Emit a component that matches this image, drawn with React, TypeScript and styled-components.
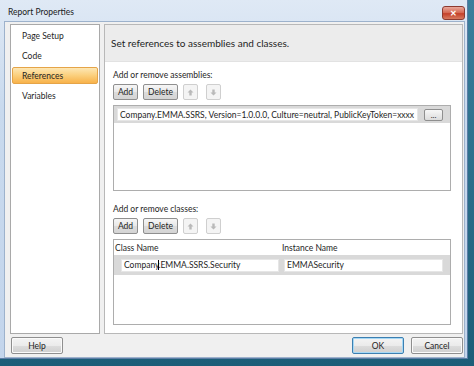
import React from 'react';
import styled, { createGlobalStyle } from 'styled-components';

const GlobalStyle = createGlobalStyle`
  html, body {
    margin: 0;
    padding: 0;
    width: 474px;
    height: 366px;
    overflow: hidden;
    background: linear-gradient(180deg, #3a7f9c 0%, #1c5d78 100%);
  }
  body {
    font-family: Lato, "Noto Sans", sans-serif;
    font-size: 8.5px;
    color: #1e1e1e;
  }
`;

const Window = styled.div`
  width: 468px;
  height: 359px;
  box-sizing: border-box;
  background: linear-gradient(180deg, #dfe9f5 0%, #c9daee 30%, #c3d5ec 100%);
  border-right: 1px solid #5d7ea6;
  border-bottom: 1px solid #5d7ea6;
  display: flex;
  flex-direction: column;
`;

const TitleBar = styled.div`
  height: 21px;
  flex-shrink: 0;
  display: flex;
  align-items: center;
  justify-content: space-between;
  padding: 3px 2px 0 8px;
  box-sizing: border-box;
`;

const Title = styled.span`
  font-size: 8.5px;
  color: #1a1a1a;
`;

const CloseButton = styled.div`
  width: 21px;
  height: 12px;
  margin-top: 1px;
  border-radius: 3px;
  border: 1px solid #8c3a30;
  background: linear-gradient(180deg, #e9a89c 0%, #d4654f 50%, #c3402a 55%, #d87a5f 100%);
  display: flex;
  align-items: center;
  justify-content: center;
  color: #fff;
  font-size: 8px;
  font-weight: bold;
  line-height: 1;
`;

const Client = styled.div`
  flex: 1;
  margin: 0 2px 3px 4px;
  background: #f0f0f0;
  border: 1px solid #9db2cc;
  padding: 2px 1px 0 5px;
  display: flex;
  flex-direction: column;
`;

const Main = styled.div`
  display: flex;
  gap: 4px;
  height: 310px;
  flex-shrink: 0;
`;

const Nav = styled.div`
  width: 90px;
  flex-shrink: 0;
  box-sizing: border-box;
  background: #fff;
  border: 1px solid #a9a9a9;
  padding: 2px 1px;
  display: flex;
  flex-direction: column;
  gap: 3px;
`;

const NavItem = styled.div<{ $selected?: boolean }>`
  height: 15px;
  display: flex;
  align-items: center;
  padding-left: 9px;
  border-radius: 2px;
  border: 1px solid ${p => (p.$selected ? '#e5a448' : 'transparent')};
  background: ${p =>
    p.$selected ? 'linear-gradient(180deg, #fde7b4 0%, #fbcf7c 50%, #f8b24a 100%)' : 'transparent'};
  color: #1e1e1e;
`;

const Content = styled.div`
  width: 359px;
  flex-shrink: 0;
  box-sizing: border-box;
  border: 1px solid #b8b8b8;
  background: #fff;
  display: flex;
  flex-direction: column;
`;

const Header = styled.div`
  height: 37px;
  flex-shrink: 0;
  box-sizing: border-box;
  background: #ececec;
  border-bottom: 1px solid #e2e2e2;
  display: flex;
  align-items: center;
  padding-left: 6px;
  font-size: 10px;
`;

const Body = styled.div`
  padding: 7px 11px 0 8px;
  display: flex;
  flex-direction: column;
`;

const Label = styled.div<{ $gap?: number }>`
  height: 12px;
  line-height: 12px;
  margin-top: ${p => p.$gap ?? 0}px;
  margin-bottom: 3px;
`;

const Toolbar = styled.div`
  display: flex;
  gap: 5px;
  margin-bottom: 5px;
`;

const ToolButton = styled.button<{ $width: number; $disabled?: boolean; $spaced?: boolean }>`
  width: ${p => p.$width}px;
  height: 16px;
  padding: 0;
  margin-left: ${p => (p.$spaced ? 3 : 0)}px;
  font-family: inherit;
  font-size: 8.5px;
  color: #1e1e1e;
  border-radius: 2px;
  border: 1px solid ${p => (p.$disabled ? '#cfcfcf' : '#8f8f8f')};
  background: ${p =>
    p.$disabled ? '#f4f4f4' : 'linear-gradient(180deg, #f6f6f6 0%, #e8e8e8 50%, #dcdcdc 51%, #d4d4d4 100%)'};
  display: flex;
  align-items: center;
  justify-content: center;
`;

const ListBox = styled.div`
  height: 86px;
  box-sizing: border-box;
  border: 1px solid #adadad;
  background: #fff;
`;

const Row = styled.div`
  background: #d9d9d9;
  height: 17px;
  display: flex;
  align-items: center;
  gap: 6px;
  padding: 0 7px 0 3px;
`;

const TextBox = styled.div<{ $width: number }>`
  width: ${p => p.$width}px;
  height: 13px;
  box-sizing: border-box;
  background: #fff;
  border: 1px solid #e6e6e6;
  display: flex;
  align-items: center;
  padding-left: 2px;
  white-space: nowrap;
  overflow: hidden;
`;

const EllipsisButton = styled.div`
  width: 19px;
  height: 12px;
  margin-left: auto;
  box-sizing: border-box;
  border-radius: 2px;
  border: 1px solid #8f8f8f;
  background: linear-gradient(180deg, #f7f7f7 0%, #dcdcdc 100%);
  font-size: 8px;
  display: flex;
  align-items: center;
  justify-content: center;
  line-height: 1;
`;

const GridHeader = styled.div`
  height: 15px;
  display: grid;
  grid-template-columns: 167px 1fr;
  align-items: center;
  padding-left: 1px;
`;

const GridRow = styled(Row)`
  height: 20px;
  padding-left: 7px;
  gap: 5px;
`;

const Caret = styled.span`
  display: inline-block;
  width: 1px;
  height: 10px;
  background: #000;
  margin: 0 -1px;
`;

const Footer = styled.div`
  display: flex;
  align-items: center;
  height: 23px;
  gap: 7px;
  padding-left: 1px;
`;

const DialogButton = styled.button<{ $default?: boolean }>`
  width: 52px;
  height: 17px;
  padding: 0;
  font-family: inherit;
  font-size: 8.5px;
  color: #1e1e1e;
  border-radius: 2px;
  border: 1px solid ${p => (p.$default ? '#3c7fb1' : '#8f8f8f')};
  box-shadow: ${p => (p.$default ? 'inset 0 0 0 1px #a6d8f5' : 'inset 0 0 0 1px #fafafa')};
  background: linear-gradient(180deg, #f4f4f4 0%, #ebebeb 50%, #dddddd 51%, #cfcfcf 100%);
  &:first-child {
    margin-right: auto;
  }
`;

const Arrow = ({ down }: { down?: boolean }) => (
  <svg width="7" height="7" viewBox="0 0 7 7" style={{ transform: down ? 'rotate(180deg)' : undefined }}>
    <path d="M3.5 0.5 L6.5 3.5 L4.7 3.5 L4.7 6.5 L2.3 6.5 L2.3 3.5 L0.5 3.5 Z" fill="#b9b9b9" />
  </svg>
);

const ButtonSet = () => (
  <Toolbar>
    <ToolButton $width={25}>Add</ToolButton>
    <ToolButton $width={35}>Delete</ToolButton>
    <ToolButton $width={15} $disabled>
      <Arrow />
    </ToolButton>
    <ToolButton $width={15} $disabled $spaced>
      <Arrow down />
    </ToolButton>
  </Toolbar>
);

export default function App() {
  return (
    <>
      <GlobalStyle />
      <Window>
        <TitleBar>
          <Title>Report Properties</Title>
          <CloseButton>✕</CloseButton>
        </TitleBar>
        <Client>
          <Main>
            <Nav>
              <NavItem>Page Setup</NavItem>
              <NavItem>Code</NavItem>
              <NavItem $selected>References</NavItem>
              <NavItem>Variables</NavItem>
            </Nav>
            <Content>
              <Header>Set references to assemblies and classes.</Header>
              <Body>
                <Label>Add or remove assemblies:</Label>
                <ButtonSet />
                <ListBox>
                  <Row>
                    <TextBox $width={301}>
                      Company.EMMA.SSRS, Version=1.0.0.0, Culture=neutral, PublicKeyToken=xxxx
                    </TextBox>
                    <EllipsisButton>...</EllipsisButton>
                  </Row>
                </ListBox>
                <Label $gap={12}>Add or remove classes:</Label>
                <ButtonSet />
                <ListBox>
                  <GridHeader>
                    <span>Class Name</span>
                    <span>Instance Name</span>
                  </GridHeader>
                  <GridRow>
                    <TextBox $width={158}>
                      Company<Caret />.EMMA.SSRS.Security
                    </TextBox>
                    <TextBox $width={159}>EMMASecurity</TextBox>
                  </GridRow>
                </ListBox>
              </Body>
            </Content>
          </Main>
          <Footer>
            <DialogButton>Help</DialogButton>
            <DialogButton $default>OK</DialogButton>
            <DialogButton>Cancel</DialogButton>
          </Footer>
        </Client>
      </Window>
    </>
  );
}
